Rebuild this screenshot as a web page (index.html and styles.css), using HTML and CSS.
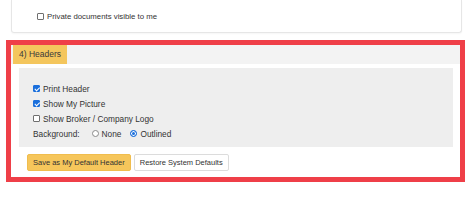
FILE: index.html
```html
<!doctype html>
<html lang="en">
<head>
	<meta charset="UTF-8">
	<title>Headers</title>
	<link rel="stylesheet" href="styles.css">
</head>
<body>
	<div class="top-card">
		<label class="check"><input type="checkbox"> Private documents visible to me</label>
	</div>

	<div class="highlight">
		<div class="tabs">
			<div class="tab">4) Headers</div>
		</div>
		<div class="panel">
			<label class="row"><input type="checkbox" checked> Print Header</label>
			<label class="row"><input type="checkbox" checked> Show My Picture</label>
			<label class="row"><input type="checkbox"> Show Broker / Company Logo</label>
			<div class="row">
				<span class="bg-label">Background:</span>
				<label class="opt"><input type="radio" name="bg"> None</label>
				<label class="opt"><input type="radio" name="bg" checked> Outlined</label>
			</div>
		</div>
		<div class="actions">
			<button class="btn btn_save">Save as My Default Header</button>
			<button class="btn btn_restore">Restore System Defaults</button>
		</div>
	</div>
</body>
</html>
```

FILE: styles.css
```css
body{
	margin: 0;
	background-color: #fff;
	font: 8.3px 'Liberation Sans', Arial, sans-serif;
	color: #333;
}
input[type=checkbox],input[type=radio]{
	-webkit-appearance: none;
	appearance: none;
	position: relative;
	width: 7px;
	height: 7px;
	margin: 0 3px 0 0;
	border: 1px solid #6f6f6f;
	background-color: #fff;
	box-sizing: border-box;
	flex: none;
}
input[type=checkbox]{
	border-radius: 1px;
}
input[type=checkbox]:checked{
	border-color: #1a6fdc;
	background-color: #1a6fdc;
}
input[type=checkbox]:checked::after{
	content: '';
	position: absolute;
	left: 1.5px;
	top: 0;
	width: 1.5px;
	height: 3.5px;
	border: solid #fff;
	border-width: 0 1px 1px 0;
	transform: rotate(45deg);
}
input[type=radio]{
	border-radius: 50%;
	border-color: #8a8a8a;
}
input[type=radio]:checked{
	border-color: #1a6fdc;
	background-color: #1a6fdc;
	box-shadow: inset 0 0 0 1px #fff;
}
.top-card{
	height: 33px;
	margin: 0 12px 0 11px;
	padding-left: 25px;
	border: 1px solid #e6e6e6;
	border-top: 0;
	border-radius: 0 0 3px 3px;
	box-shadow: 0 1px 2px rgba(0,0,0,0.04);
	display: flex;
	align-items: center;
	box-sizing: border-box;
	font-size: 7.8px;
}
.check{
	display: flex;
	align-items: center;
	padding-top: 1px;
}
.highlight{
	margin: 7px 9px 0 6px;
	border: 5px solid #ef3f48;
}
.tabs{
	height: 19px;
	padding-left: 2px;
	background-color: #f3f3f3;
	display: flex;
}
.tab{
	padding: 0 6px;
	line-height: 19px;
	font-size: 8.5px;
	background-color: #f4c65d;
	color: #3a3a3a;
}
.panel{
	margin: 4px 7px 0 8px;
	padding: 13px 14px 6px;
	background-color: #eeeeee;
}
.row{
	height: 15px;
	display: flex;
	align-items: center;
}
.bg-label{
	margin-right: 12px;
}
.opt{
	display: flex;
	align-items: center;
	margin-right: 9px;
}
.actions{
	padding: 7px 0 6px 16px;
	display: flex;
	gap: 3px;
}
.btn{
	height: 17px;
	padding: 0 5px;
	font: 7.5px 'Liberation Sans', Arial, sans-serif;
	color: #333;
	border-radius: 2px;
	cursor: pointer;
}
.btn_save{
	background-color: #f6c65b;
	border: 1px solid #f0bd4e;
}
.btn_restore{
	background-color: #fff;
	border: 1px solid #dcdcdc;
}
```
